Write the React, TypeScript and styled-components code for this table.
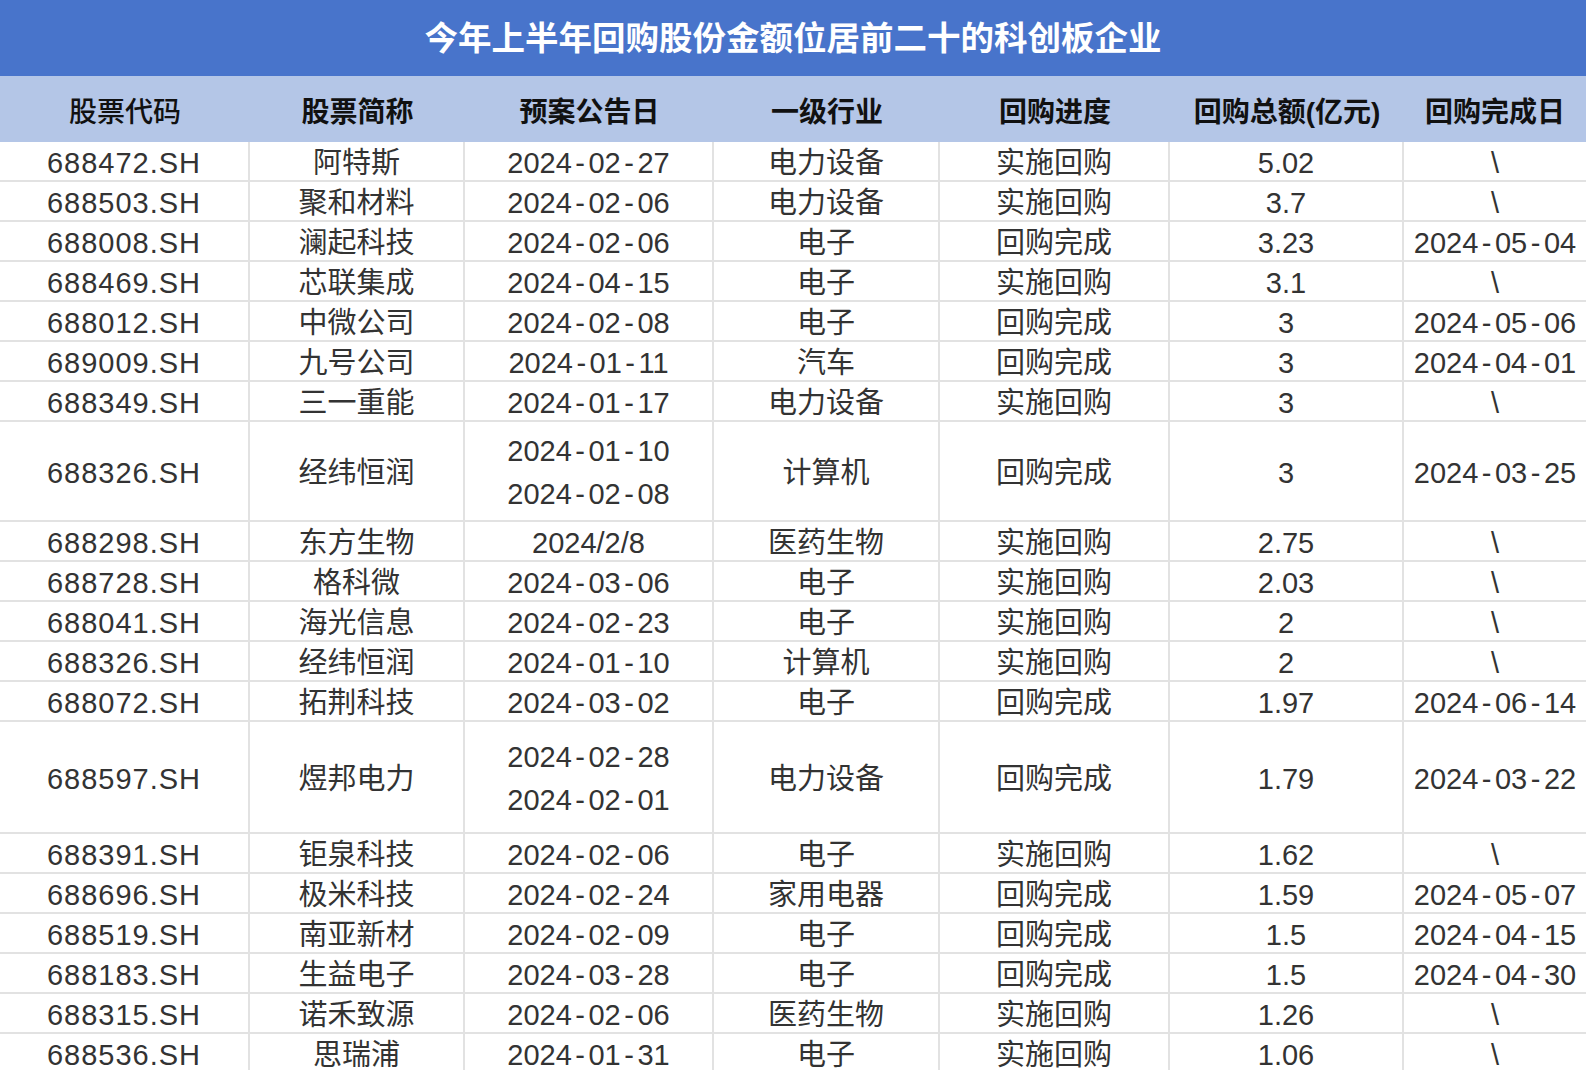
import React from "react";
import styled, { createGlobalStyle } from "styled-components";

const GlobalStyle = createGlobalStyle`
  html, body {
    margin: 0;
    padding: 0;
    background: #ffffff;
    overflow: hidden;
  }
  body {
    font-family: "Liberation Sans", "Noto Sans CJK SC", sans-serif;
    color: #333333;
  }
`;

const COLS = "250px 215px 249px 226px 230px 234px 182px";

const Page = styled.div`
  width: 1586px;
  display: flex;
  flex-direction: column;
`;

const TitleBar = styled.div`
  height: 76px;
  box-sizing: border-box;
  padding-bottom: 5px;
  background: #4874cb;
  display: flex;
  align-items: center;
  justify-content: center;
  color: #ffffff;
  font-family: "Noto Sans CJK SC", sans-serif;
  font-weight: 700;
  font-size: 33.5px;
`;

const HeaderRow = styled.div`
  height: 66px;
  background: #b4c6e7;
  display: grid;
  grid-template-columns: ${COLS};
`;

const HeaderCell = styled.div<{ $weight?: number }>`
  display: flex;
  align-items: center;
  justify-content: center;
  padding-top: 1px;
  font-family: "Liberation Sans", "Noto Sans CJK SC", sans-serif;
  font-size: 28px;
  font-weight: ${(p) => p.$weight ?? 700};
  color: #111111;
`;

const BodyRow = styled.div<{ $h: number }>`
  height: ${(p) => p.$h}px;
  display: grid;
  grid-template-columns: ${COLS};
  grid-template-rows: ${(p) => p.$h}px;
  overflow: hidden;
`;

const Cell = styled.div<{ $last?: boolean; $ls?: number }>`
  box-sizing: border-box;
  min-height: 0;
  display: flex;
  flex-direction: column;
  align-items: center;
  justify-content: center;
  gap: 8px;
  padding-top: 4px;
  border-bottom: 2px solid #e2e2e2;
  border-right: ${(p) => (p.$last ? "none" : "2px solid #e2e2e2")};
  font-family: "Liberation Sans", "Noto Sans CJK SC", sans-serif;
  font-size: 29px;
  letter-spacing: ${(p) => p.$ls ?? 0}px;
  color: #333333;
  white-space: nowrap;
  line-height: 35px;
`;

const Dash = styled.span`
  margin: 0 3.5px;
`;

type Row = {
  code: string;
  name: string;
  dates: string[];
  industry: string;
  progress: string;
  amount: string;
  done: string;
  h: number;
};

const rows: Row[] = [
  { code: "688472.SH", name: "阿特斯", dates: ["2024-02-27"], industry: "电力设备", progress: "实施回购", amount: "5.02", done: "\\", h: 40 },
  { code: "688503.SH", name: "聚和材料", dates: ["2024-02-06"], industry: "电力设备", progress: "实施回购", amount: "3.7", done: "\\", h: 40 },
  { code: "688008.SH", name: "澜起科技", dates: ["2024-02-06"], industry: "电子", progress: "回购完成", amount: "3.23", done: "2024-05-04", h: 40 },
  { code: "688469.SH", name: "芯联集成", dates: ["2024-04-15"], industry: "电子", progress: "实施回购", amount: "3.1", done: "\\", h: 40 },
  { code: "688012.SH", name: "中微公司", dates: ["2024-02-08"], industry: "电子", progress: "回购完成", amount: "3", done: "2024-05-06", h: 40 },
  { code: "689009.SH", name: "九号公司", dates: ["2024-01-11"], industry: "汽车", progress: "回购完成", amount: "3", done: "2024-04-01", h: 40 },
  { code: "688349.SH", name: "三一重能", dates: ["2024-01-17"], industry: "电力设备", progress: "实施回购", amount: "3", done: "\\", h: 40 },
  { code: "688326.SH", name: "经纬恒润", dates: ["2024-01-10", "2024-02-08"], industry: "计算机", progress: "回购完成", amount: "3", done: "2024-03-25", h: 100 },
  { code: "688298.SH", name: "东方生物", dates: ["2024/2/8"], industry: "医药生物", progress: "实施回购", amount: "2.75", done: "\\", h: 40 },
  { code: "688728.SH", name: "格科微", dates: ["2024-03-06"], industry: "电子", progress: "实施回购", amount: "2.03", done: "\\", h: 40 },
  { code: "688041.SH", name: "海光信息", dates: ["2024-02-23"], industry: "电子", progress: "实施回购", amount: "2", done: "\\", h: 40 },
  { code: "688326.SH", name: "经纬恒润", dates: ["2024-01-10"], industry: "计算机", progress: "实施回购", amount: "2", done: "\\", h: 40 },
  { code: "688072.SH", name: "拓荆科技", dates: ["2024-03-02"], industry: "电子", progress: "回购完成", amount: "1.97", done: "2024-06-14", h: 40 },
  { code: "688597.SH", name: "煜邦电力", dates: ["2024-02-28", "2024-02-01"], industry: "电力设备", progress: "回购完成", amount: "1.79", done: "2024-03-22", h: 112 },
  { code: "688391.SH", name: "钜泉科技", dates: ["2024-02-06"], industry: "电子", progress: "实施回购", amount: "1.62", done: "\\", h: 40 },
  { code: "688696.SH", name: "极米科技", dates: ["2024-02-24"], industry: "家用电器", progress: "回购完成", amount: "1.59", done: "2024-05-07", h: 40 },
  { code: "688519.SH", name: "南亚新材", dates: ["2024-02-09"], industry: "电子", progress: "回购完成", amount: "1.5", done: "2024-04-15", h: 40 },
  { code: "688183.SH", name: "生益电子", dates: ["2024-03-28"], industry: "电子", progress: "回购完成", amount: "1.5", done: "2024-04-30", h: 40 },
  { code: "688315.SH", name: "诺禾致源", dates: ["2024-02-06"], industry: "医药生物", progress: "实施回购", amount: "1.26", done: "\\", h: 40 },
  { code: "688536.SH", name: "思瑞浦", dates: ["2024-01-31"], industry: "电子", progress: "实施回购", amount: "1.06", done: "\\", h: 40 },
];

const DateText: React.FC<{ value: string }> = ({ value }) => {
  const parts = value.split("-");
  if (parts.length === 1) return <span>{value}</span>;
  return (
    <span>
      {parts.map((p, i) => (
        <React.Fragment key={i}>
          {i > 0 && <Dash>-</Dash>}
          {p}
        </React.Fragment>
      ))}
    </span>
  );
};

const headers = ["股票代码", "股票简称", "预案公告日", "一级行业", "回购进度", "回购总额(亿元)", "回购完成日"];

export default function App() {
  return (
    <>
      <GlobalStyle />
      <Page>
        <TitleBar>今年上半年回购股份金额位居前二十的科创板企业</TitleBar>
        <HeaderRow>
          {headers.map((h, i) => (
            <HeaderCell key={h} $weight={i === 0 ? 500 : 700}>
              {h}
            </HeaderCell>
          ))}
        </HeaderRow>
        {rows.map((r, idx) => (
          <BodyRow key={idx} $h={r.h}>
            <Cell $ls={1}>{r.code}</Cell>
            <Cell>{r.name}</Cell>
            <Cell>
              {r.dates.map((d) => (
                <DateText key={d} value={d} />
              ))}
            </Cell>
            <Cell>{r.industry}</Cell>
            <Cell>{r.progress}</Cell>
            <Cell>{r.amount}</Cell>
            <Cell $last>
              <DateText value={r.done} />
            </Cell>
          </BodyRow>
        ))}
      </Page>
    </>
  );
}
